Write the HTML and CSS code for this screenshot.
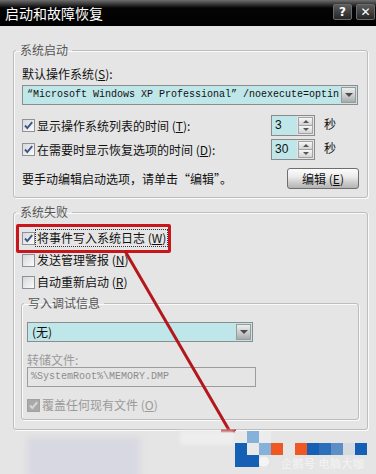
FILE: index.html
```html
<!DOCTYPE html>
<html lang="zh-CN">
<head>
  <meta charset="UTF-8" />
  <title>启动和故障恢复</title>
  <link rel="stylesheet" href="styles.css">
</head>
<body>
  <div class="window">
    <div class="titlebar">
      <span class="title">启动和故障恢复</span>
      <span class="tbtn">?</span>
      <span class="tbtn">✕</span>
    </div>

    <div class="content">
      <fieldset class="group startup">
        <legend>系统启动</legend>
        <div class="label">默认操作系统(<u>S</u>):</div>
        <div class="combo wide">
          <span class="combo-text mono">“Microsoft Windows XP Professional” /noexecute=optin</span>
          <span class="combo-btn"><span class="tri-down"></span></span>
        </div>

        <div class="row first">
          <span class="cb"><svg viewBox="0 0 11 11"><path d="M2 5.5l2.3 2.6L9.2 2.2" /></svg></span>
          <span class="row-label">显示操作系统列表的时间 (<u>T</u>):</span>
          <div class="spin">
            <span class="spin-val">3</span>
            <span class="spin-btns"><span class="sb"><span class="tri-up"></span></span><span class="sb"><span class="tri-down small"></span></span></span>
          </div>
          <span class="unit">秒</span>
        </div>
        <div class="row second">
          <span class="cb"><svg viewBox="0 0 11 11"><path d="M2 5.5l2.3 2.6L9.2 2.2" /></svg></span>
          <span class="row-label">在需要时显示恢复选项的时间 (<u>D</u>):</span>
          <div class="spin">
            <span class="spin-val">30</span>
            <span class="spin-btns"><span class="sb"><span class="tri-up"></span></span><span class="sb"><span class="tri-down small"></span></span></span>
          </div>
          <span class="unit">秒</span>
        </div>

        <div class="edit-row">
          <span>要手动编辑启动选项，请单击“编辑”。</span>
          <span class="btn">编辑 (<u>E</u>)</span>
        </div>
      </fieldset>

      <fieldset class="group failure">
        <legend>系统失败</legend>
        <div class="check-row">
          <span class="cb"><svg viewBox="0 0 11 11"><path d="M2 5.5l2.3 2.6L9.2 2.2" /></svg></span>
          <span class="focus">将事件写入系统日志 (<u>W</u>)</span>
        </div>
        <div class="check-row">
          <span class="cb"></span>
          <span>发送管理警报 (<u>N</u>)</span>
        </div>
        <div class="check-row">
          <span class="cb"></span>
          <span>自动重新启动 (<u>R</u>)</span>
        </div>

        <fieldset class="group debug">
          <legend>写入调试信息</legend>
          <div class="combo narrow">
            <span class="combo-text">(无)</span>
            <span class="combo-btn"><span class="tri-down"></span></span>
          </div>
          <div class="label muted dump-label">转储文件:</div>
          <div class="field mono">%SystemRoot%\MEMORY.DMP</div>
          <div class="check-row disabled">
            <span class="cb grey"><svg viewBox="0 0 11 11"><path d="M2 5.5l2.3 2.6L9.2 2.2" /></svg></span>
            <span>覆盖任何现有文件 (<u>O</u>)</span>
          </div>
        </fieldset>
      </fieldset>
    </div>

    <!-- annotation laid over the screenshot -->
    <div class="highlight"></div>
    <svg class="arrow" viewBox="0 0 376 474">
      <line x1="125" y1="251" x2="229" y2="430" />
      <line x1="221" y1="431" x2="236" y2="431" />
    </svg>

    <!-- blurred / pixelated watermark at the bottom -->
    <div class="blur-patch"></div>
    <div class="light-patch"></div>
    <div class="mosaic">
      <span class="t lg"></span><span class="t lb"></span><span class="t wh"></span><span></span><span></span><span></span><span></span><span></span><span></span><span></span><span></span>
      <span class="t db"></span><span class="t lg"></span><span class="t lb"></span><span class="t or"></span><span class="t bg"></span><span class="t or"></span><span class="t db"></span><span class="t bl"></span><span class="t mb"></span><span class="t gr"></span><span class="t db"></span>
      <span class="t db"></span><span class="t db"></span><span class="t peng"></span><span></span><span></span><span></span><span></span><span></span><span></span><span></span><span></span>
    </div>
    <span class="mark">企鹅号 电脑大咖</span>
  </div>
</body>
</html>
```

FILE: styles.css
```css
* {
  margin: 0;
  padding: 0;
  box-sizing: border-box;
}

body {
  width: 376px;
  height: 474px;
  overflow: hidden;
  background: #e5e5e5;
  font-family: "Noto Sans CJK SC", "Noto Sans", sans-serif;
  font-size: 12px;
  line-height: 14px;
  color: #111;
}

u {
  text-decoration: underline;
  text-underline-offset: 1px;
}

.window {
  position: relative;
  height: 474px;
}

.titlebar {
  height: 26px;
  display: flex;
  align-items: center;
  padding: 0 1px 2px 5px;
  background: linear-gradient(#6e6e6e 0, #2c2c2c 5px, #050505 8px, #000 100%);
}

.title {
  flex: 1;
  color: #fff;
  font-size: 14px;
  line-height: 16px;
  padding-top: 2px;
}

.tbtn {
  width: 19px;
  height: 16px;
  margin-left: 4px;
  display: flex;
  align-items: center;
  justify-content: center;
  color: #fff;
  font-family: "DejaVu Sans", sans-serif;
  font-weight: bold;
  font-size: 12px;
  background: linear-gradient(#5c5c5c, #262626);
  border: 1px solid #6a6a6a;
  border-radius: 2px;
}

.content {
  padding: 17px 8px 0 13px;
}

.group {
  border: 1px solid #bdbdbd;
  border-radius: 3px;
  box-shadow: 1px 1px 0 #fafafa, inset 1px 1px 0 #fafafa;
}

.group legend {
  padding: 0 4px;
  color: #555;
  line-height: 14px;
}

.startup {
  padding: 10px 9px 8px 8px;
}

.startup legend,
.failure legend {
  margin-left: -6px;
}

.label {
  height: 14px;
}

.muted,
.disabled {
  color: #9a9a9a;
}

.mono {
  font-family: "Liberation Mono", monospace;
  font-size: 10px;
}

.combo {
  display: flex;
  align-items: center;
  height: 20px;
  border: 1px solid #8c8c8c;
  background: #bfe6e8;
}

.combo.wide {
  margin-top: 4px;
}

.combo.narrow {
  width: 226px;
}

.combo-text {
  flex: 1;
  padding-left: 4px;
  line-height: 18px;
  white-space: nowrap;
  overflow: hidden;
}

.combo-btn {
  width: 15px;
  height: 16px;
  margin: 0 1px;
  display: flex;
  align-items: center;
  justify-content: center;
  border: 1px solid #9a9a9a;
  background: linear-gradient(#ededed, #c8c8c8 60%, #a9a9a9);
}

.tri-down {
  width: 0;
  height: 0;
  border-left: 4px solid transparent;
  border-right: 4px solid transparent;
  border-top: 4px solid #4c4c4c;
}

.tri-up {
  width: 0;
  height: 0;
  border-left: 3px solid transparent;
  border-right: 3px solid transparent;
  border-bottom: 3px solid #555;
}

.tri-down.small {
  border-left-width: 3px;
  border-right-width: 3px;
  border-top-width: 3px;
  border-top-color: #555;
}

.row {
  display: flex;
  align-items: center;
  height: 21px;
}

.row.first {
  margin-top: 10px;
}

.row.second {
  margin-top: 3px;
}

.row-label {
  flex: 1;
}

.cb {
  width: 13px;
  height: 13px;
  margin-right: 2px;
  flex: none;
  display: flex;
  align-items: center;
  justify-content: center;
  border: 1px solid #8e9296;
  background: linear-gradient(135deg, #d6d8da, #fbfbfb);
}

.cb svg {
  width: 11px;
  height: 11px;
}

.cb path {
  fill: none;
  stroke: #3d5688;
  stroke-width: 1.9;
}

.cb.grey {
  background: #a9a9a9;
  border-color: #a0a0a0;
}

.cb.grey path {
  stroke: #d8d8d8;
}

.spin {
  width: 44px;
  height: 21px;
  display: flex;
  border: 1px solid #8a8a8a;
  background: #bfe6e8;
}

.spin-val {
  flex: 1;
  padding-left: 3px;
  line-height: 19px;
  font-family: "Liberation Sans", sans-serif;
}

.spin-btns {
  width: 17px;
  display: flex;
  flex-direction: column;
  padding: 1px;
  background: #e5e5e5;
}

.sb {
  flex: 1;
  display: flex;
  align-items: center;
  justify-content: center;
  border: 1px solid #a4a4a4;
  background: linear-gradient(#f7f7f7, #d2d2d2);
}

.sb + .sb {
  margin-top: -1px;
}

.unit {
  width: 43px;
  padding-left: 9px;
  padding-bottom: 3px;
}

.edit-row {
  display: flex;
  align-items: center;
  justify-content: space-between;
  height: 21px;
  margin-top: 8px;
}

.btn {
  width: 72px;
  height: 21px;
  margin-right: -1px;
  display: flex;
  align-items: center;
  justify-content: center;
  border: 1px solid #6e6e6e;
  border-radius: 3px;
  background: linear-gradient(#fcfcfc, #ececec 40%, #c9c9c9 75%, #b4b4b4);
}

.failure {
  margin-top: 7px;
  padding: 8px 8px 9px 8px;
}

.check-row {
  display: flex;
  align-items: center;
  height: 22px;
}

.focus {
  outline: 1px dotted #333;
  outline-offset: 1px;
}

.debug {
  margin: 3px 0 0 -1px;
  padding: 12px 5px 5px 5px;
}

.debug legend {
  margin-left: -3px;
}

.dump-label {
  margin-top: 11px;
}

.field {
  width: 229px;
  height: 20px;
  line-height: 18px;
  padding-left: 3px;
  border: 1px solid #9c9c9c;
  color: #8c8c8c;
}

.check-row.disabled {
  height: 18px;
  margin-top: 9px;
}

.highlight {
  position: absolute;
  left: 16px;
  top: 224px;
  width: 155px;
  height: 29px;
  border: 3px solid #c8161d;
  border-radius: 2px;
}

.arrow {
  position: absolute;
  left: 0;
  top: 0;
  width: 376px;
  height: 474px;
  pointer-events: none;
}

.arrow line {
  stroke: #b3171c;
  stroke-width: 3;
}

.blur-patch {
  position: absolute;
  left: 27px;
  top: 437px;
  width: 113px;
  height: 42px;
  background: #d8d8e2;
  filter: blur(3px);
}

.light-patch {
  position: absolute;
  left: 180px;
  top: 431px;
  width: 55px;
  height: 14px;
  background: #eeeeee;
  filter: blur(2px);
}

.mosaic {
  position: absolute;
  left: 235px;
  top: 431px;
  display: grid;
  grid-template-columns: repeat(11, 12px);
  grid-auto-rows: 12px;
}

.t.lg { background: #e9e9e9; }
.t.wh { background: #ececec; }
.t.lb { background: #86b2da; }
.t.db { background: #1560b4; }
.t.bl { background: #2b6fba; }
.t.mb { background: #5b8fc6; }
.t.gr { background: #d6dbe1; }
.t.or { background: #ef5723; }
.t.bg { background: #e6e6e6; }

.t.peng {
  background: radial-gradient(ellipse at 40% 55%, #f4f4f4 0 45%, #e3e3e3 60%);
}

.mark {
  position: absolute;
  left: 281px;
  top: 457px;
  color: #f4f4f4;
  font-size: 11px;
  line-height: 13px;
  letter-spacing: 0.5px;
}
```
